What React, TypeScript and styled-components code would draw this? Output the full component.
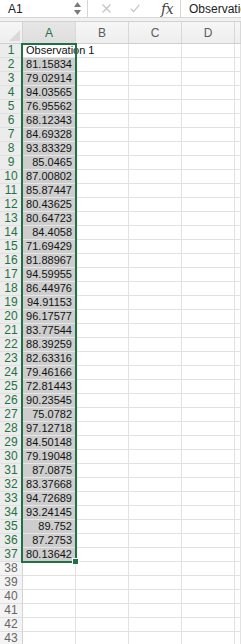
import React from 'react';
import styled, { createGlobalStyle } from 'styled-components';

const GlobalStyle = createGlobalStyle`
  html, body { margin: 0; padding: 0; background: #ffffff; }
  body { font-family: "Liberation Sans", Arial, sans-serif; overflow: hidden; }
`;

const values = [
  '81.15834', '79.02914', '94.03565', '76.95562', '68.12343', '84.69328', '93.83329',
  '85.0465', '87.00802', '85.87447', '80.43625', '80.64723', '84.4058', '71.69429',
  '81.88967', '94.59955', '86.44976', '94.91153', '96.17577', '83.77544', '88.39259',
  '82.63316', '79.46166', '72.81443', '90.23545', '75.0782', '97.12718', '84.50148',
  '79.19048', '87.0875', '83.37668', '94.72689', '93.24145', '89.752', '87.2753', '80.13642',
];

const GREEN = '#1f7244';
const GRID = '#e2e2e2';
const COLS = '23px 53px 53px 53px 53px 1fr';
const ROW_H = 14;

const Page = styled.div`
  width: 241px;
  height: 644px;
  overflow: hidden;
  display: flex;
  flex-direction: column;
`;

const Toolbar = styled.div`
  display: flex;
  height: 17px;
  background: #ffffff;
  border-bottom: 1px solid #d6d6d6;
  flex-shrink: 0;
`;

const ToolbarGap = styled.div`
  height: 3px;
  background: #f1f1f1;
  border-bottom: 1px solid #d2d2d2;
  flex-shrink: 0;
`;

const NameBox = styled.div`
  width: 88px;
  box-sizing: border-box;
  border-right: 1px solid #d6d6d6;
  display: flex;
  align-items: center;
  justify-content: space-between;
  padding: 0 6px 0 8px;
  font-size: 12px;
  color: #222;
`;

const Spinner = styled.div`
  display: flex;
  flex-direction: column;
  gap: 3px;
  align-items: center;
`;

const Actions = styled.div`
  width: 93px;
  box-sizing: border-box;
  border-right: 1px solid #d6d6d6;
  display: flex;
  align-items: center;
  padding-left: 13px;
`;

const ActionIcon = styled.span<{ $gap?: number }>`
  width: 10px;
  margin-left: ${p => p.$gap ?? 0}px;
  display: flex;
  justify-content: center;
`;

const Fx = styled.span`
  font-family: "DejaVu Serif", "Liberation Serif", serif;
  font-style: italic;
  font-size: 14px;
  color: #444;
  margin-left: 21px;
  letter-spacing: -0.5px;
  line-height: 1;
`;

const FormulaInput = styled.div`
  flex: 1;
  min-width: 0;
  display: flex;
  align-items: center;
  padding-left: 8px;
  font-size: 12px;
  color: #222;
  white-space: nowrap;
  overflow: hidden;
`;

const HeaderRow = styled.div`
  display: grid;
  grid-template-columns: ${COLS};
  height: 22px;
  flex-shrink: 0;
  border-bottom: 1px solid #cfcfcf;
  box-sizing: border-box;
  background: linear-gradient(#f6f6f6, #eeeeee);
`;

const Corner = styled.div`
  border-right: 1px solid #d4d4d4;
  display: flex;
  align-items: flex-end;
  justify-content: flex-end;
  padding: 0 2px 2px 0;
`;

const ColHead = styled.div<{ $active?: boolean }>`
  border-right: 1px solid #d8d8d8;
  display: flex;
  align-items: center;
  justify-content: center;
  font-size: 12px;
  color: ${p => (p.$active ? GREEN : '#5c5c5c')};
  background: ${p => (p.$active ? 'linear-gradient(#e6e6e6, #dedede)' : 'transparent')};
`;

const Body = styled.div`
  position: relative;
  flex: 1;
`;

const Row = styled.div`
  display: grid;
  grid-template-columns: ${COLS};
  height: ${ROW_H}px;
`;

const RowHead = styled.div<{ $active?: boolean }>`
  box-sizing: border-box;
  border-right: 1px solid #d4d4d4;
  border-bottom: 1px solid #e0e0e0;
  background: ${p => (p.$active ? '#ececec' : '#f4f4f4')};
  color: ${p => (p.$active ? GREEN : '#666')};
  font-size: 12px;
  line-height: 13px;
  text-align: center;
`;

const Cell = styled.div<{ $fill?: boolean; $left?: boolean }>`
  box-sizing: border-box;
  border-right: 1px solid ${p => (p.$fill ? '#e6e6e6' : GRID)};
  border-bottom: 1px solid ${p => (p.$fill ? '#e6e6e6' : GRID)};
  background: ${p => (p.$fill ? '#cdcdcd' : 'transparent')};
  font-size: 11px;
  line-height: 13px;
  color: #111;
  white-space: nowrap;
  text-align: ${p => (p.$left ? 'left' : 'right')};
  padding: ${p => (p.$left ? '0 0 0 3px' : '0 3px 0 0')};
  overflow: visible;
`;

const Selection = styled.div`
  position: absolute;
  left: 21px;
  top: -1px;
  width: 56px;
  height: ${37 * ROW_H + 2}px;
  box-sizing: border-box;
  border: 2px solid ${GREEN};
  pointer-events: none;
`;

const FillHandle = styled.div`
  position: absolute;
  right: -4px;
  bottom: -4px;
  width: 5px;
  height: 5px;
  background: ${GREEN};
  border: 1px solid #fff;
`;

export default function App() {
  const rows = Array.from({ length: 43 }, (_, i) => i + 1);
  return (
    <Page>
      <GlobalStyle />
      <Toolbar>
        <NameBox>
          <span>A1</span>
          <Spinner>
            <svg width="7" height="5" viewBox="0 0 7 5"><path d="M3.5 0 L7 5 L0 5 Z" fill="#7a7a7a" /></svg>
            <svg width="7" height="5" viewBox="0 0 7 5"><path d="M0 0 L7 0 L3.5 5 Z" fill="#7a7a7a" /></svg>
          </Spinner>
        </NameBox>
        <Actions>
          <ActionIcon>
            <svg width="9" height="9" viewBox="0 0 9 9">
              <path d="M0.5 0.5 L8.5 8.5 M8.5 0.5 L0.5 8.5" stroke="#c4c4c4" strokeWidth="1.3" />
            </svg>
          </ActionIcon>
          <ActionIcon $gap={19}>
            <svg width="11" height="9" viewBox="0 0 11 9">
              <path d="M0.7 4.6 L3.9 8 L10.3 0.6" stroke="#c4c4c4" strokeWidth="1.3" fill="none" />
            </svg>
          </ActionIcon>
          <Fx>fx</Fx>
        </Actions>
        <FormulaInput>Observation 1</FormulaInput>
      </Toolbar>
      <ToolbarGap />
      <HeaderRow>
        <Corner>
          <svg width="11" height="11" viewBox="0 0 11 11"><path d="M11 0 L11 11 L0 11 Z" fill="#d9d9d9" /></svg>
        </Corner>
        <ColHead $active>A</ColHead>
        <ColHead>B</ColHead>
        <ColHead>C</ColHead>
        <ColHead>D</ColHead>
        <ColHead />
      </HeaderRow>
      <Body>
        {rows.map(r => {
          const active = r <= 37;
          const text = r === 1 ? 'Observation 1' : r <= 37 ? values[r - 2] : '';
          return (
            <Row key={r}>
              <RowHead $active={active}>{r}</RowHead>
              <Cell $fill={r >= 2 && r <= 37} $left={r === 1}>{text}</Cell>
              <Cell />
              <Cell />
              <Cell />
              <Cell />
            </Row>
          );
        })}
        <Selection>
          <FillHandle />
        </Selection>
      </Body>
    </Page>
  );
}
